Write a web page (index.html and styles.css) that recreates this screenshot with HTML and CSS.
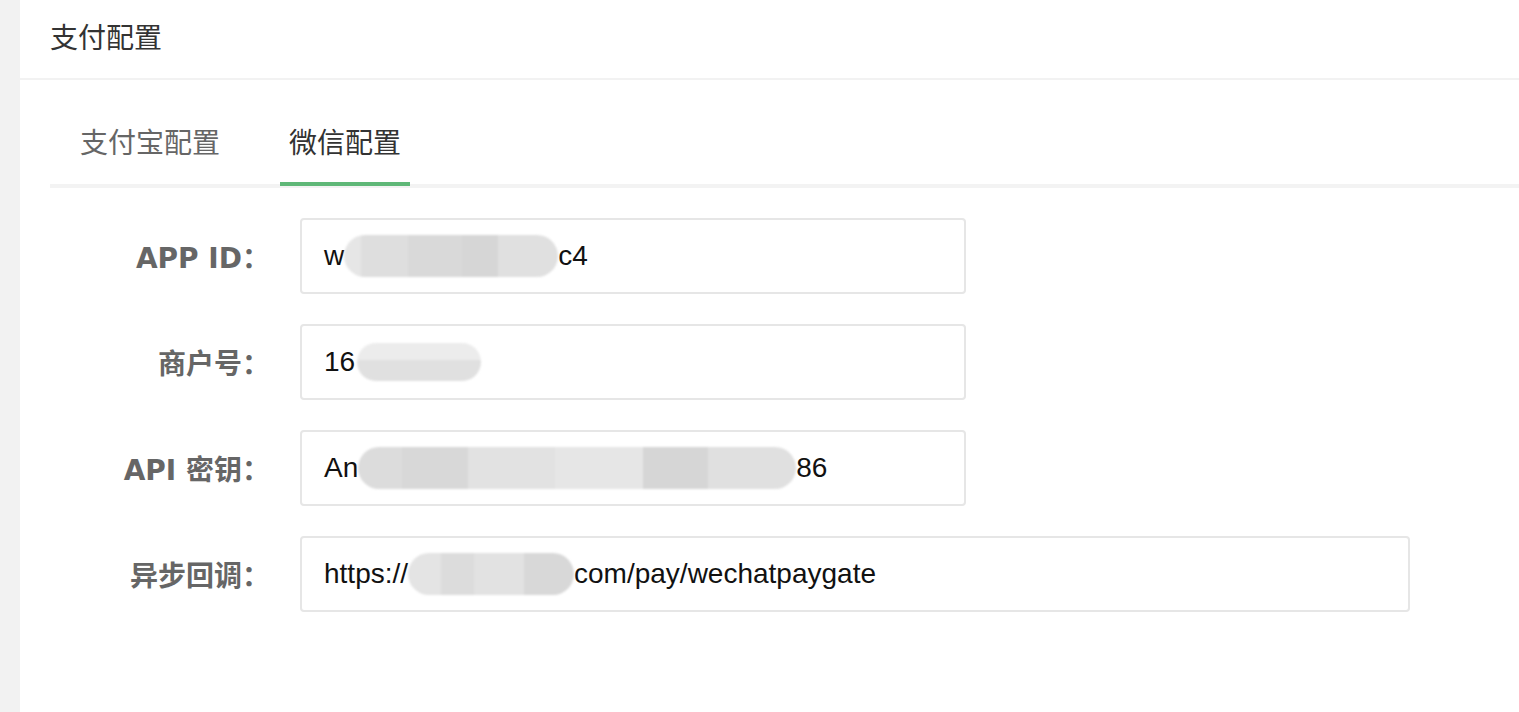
FILE: index.html
```html
<!DOCTYPE html>
<html lang="zh-CN">
<head>
<meta charset="utf-8">
<title>支付配置</title>
<link rel="stylesheet" href="styles.css">
</head>
<body>
<div class="card">
  <div class="card-header">支付配置</div>
  <div class="card-body">
    <ul class="tab-title">
      <li class="tab">支付宝配置</li>
      <li class="tab tab-active">微信配置</li>
    </ul>
    <form class="form">
      <div class="form-item">
        <label class="form-label">APP ID：</label>
        <div class="input input-short">w<span class="blob blob-a"></span>c4</div>
      </div>
      <div class="form-item">
        <label class="form-label">商户号：</label>
        <div class="input input-short">16<span class="blob blob-b"></span></div>
      </div>
      <div class="form-item">
        <label class="form-label">API 密钥：</label>
        <div class="input input-short">An<span class="blob blob-c"></span>86</div>
      </div>
      <div class="form-item">
        <label class="form-label">异步回调：</label>
        <div class="input input-long">https://<span class="blob blob-d"></span>com/pay/wechatpaygate</div>
      </div>
    </form>
  </div>
</div>
</body>
</html>
```

FILE: styles.css
```css
* { box-sizing: border-box; }

html, body {
  margin: 0;
  padding: 0;
  background: #f2f2f2;
}

body {
  padding-left: 20px;
  font-family: "Liberation Sans", "Noto Sans CJK SC", sans-serif;
}

.card {
  background: #fff;
  min-height: 100vh;
}

.card-header {
  height: 80px;
  line-height: 72px;
  padding-left: 30px;
  font-size: 28px;
  color: #333;
  border-bottom: 2px solid #f2f2f2;
  font-family: "Noto Sans CJK SC", sans-serif;
}

.card-body {
  padding: 20px 0 0 30px;
}

.tab-title {
  list-style: none;
  margin: 0;
  padding: 0;
  display: flex;
  height: 88px;
  border-bottom: 4px solid #f3f3f3;
  font-family: "Noto Sans CJK SC", sans-serif;
}

.tab {
  position: relative;
  height: 84px;
  line-height: 82px;
  font-size: 28px;
  color: #666;
  padding: 0 30px;
}

.tab-active {
  color: #333;
  margin-left: 30px;
  padding: 0;
  width: 130px;
  text-align: center;
}

.tab-active::after {
  content: "";
  position: absolute;
  left: 0;
  right: 0;
  bottom: -2px;
  height: 4px;
  background: #5fb878;
}

.form {
  padding-top: 30px;
}

.form-item {
  display: flex;
  align-items: center;
  margin-bottom: 30px;
}

.form-label {
  width: 250px;
  padding-right: 30px;
  text-align: right;
  font-family: "DejaVu Sans", "Noto Sans CJK SC", sans-serif;
  font-size: 28px;
  font-weight: bold;
  color: #666;
}

.input {
  height: 76px;
  border: 2px solid #e6e6e6;
  border-radius: 4px;
  padding-left: 22px;
  display: flex;
  align-items: center;
  font-size: 28px;
  color: #111;
  white-space: nowrap;
  font-family: "Liberation Sans", sans-serif;
}

.input-short { width: 666px; }
.input-long { width: 1110px; }

.blob {
  display: inline-block;
  height: 42px;
  border-radius: 21px;
  filter: blur(0.8px);
}

.blob-a {
  width: 214px;
  background: linear-gradient(to right, #e6e6e6 0 8%, #dedede 8% 30%, #d9d9d9 30% 55%, #d6d6d6 55% 72%, #e0e0e0 72% 100%);
}

.blob-b {
  width: 124px;
  margin-left: 2px;
  height: 38px;
  background: linear-gradient(to bottom, #ececec 0 45%, #e0e0e0 45% 100%);
}

.blob-c {
  width: 438px;
  background: linear-gradient(to right, #dcdcdc 0 10%, #d8d8d8 10% 25%, #e2e2e2 25% 45%, #e6e6e6 45% 65%, #d6d6d6 65% 80%, #e0e0e0 80% 100%);
}

.blob-d {
  width: 166px;
  background: linear-gradient(to right, #e4e4e4 0 20%, #dcdcdc 20% 40%, #e2e2e2 40% 70%, #d8d8d8 70% 100%);
}
```
